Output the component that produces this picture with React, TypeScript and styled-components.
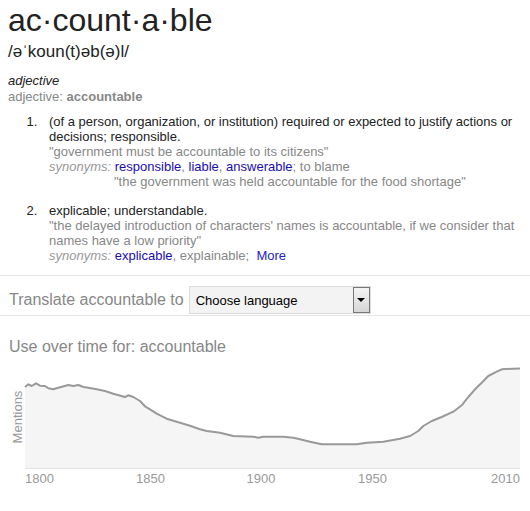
import React from "react";
import styled, { createGlobalStyle } from "styled-components";

const Global = createGlobalStyle`
  html, body { margin: 0; padding: 0; background: #fff; }
  body { font-family: Arial, "Liberation Sans", sans-serif; color: #222; }
`;

const Page = styled.div`
  width: 530px;
  overflow: hidden;
`;

const Entry = styled.section`
  padding: 2px 8px 12px 8px;
`;

const Headword = styled.h1`
  margin: 0;
  font-size: 32px;
  line-height: 36px;
  font-weight: normal;
  color: #222;
`;

const Pron = styled.div`
  font-size: 17px;
  line-height: 20px;
  margin-top: 4px;
  color: #222;
`;

const Pos = styled.div`
  margin-top: 11px;
  font-size: 13px;
  line-height: 16px;
  font-style: italic;
  color: #222;
`;

const Forms = styled.div`
  font-size: 13px;
  line-height: 16px;
  color: #878787;
  b { font-weight: bold; }
`;

const DefList = styled.ol`
  margin: 9px 0 0 0;
  padding: 0 0 0 33px;
  font-size: 13px;
  line-height: 15px;
`;

const DefItem = styled.li`
  padding-left: 8px;
  margin-bottom: 14px;
  &:last-child { margin-bottom: 0; }
`;

const DefText = styled.div`
  color: #222;
`;

const Example = styled.div<{ $indent?: boolean }>`
  color: #878787;
  padding-left: ${(p) => (p.$indent ? "65px" : "0")};
`;

const Syn = styled.div`
  color: #878787;
  i { font-style: italic; color: #999; }
`;

const SynLink = styled.a<{ $bright?: boolean }>`
  color: ${(p) => (p.$bright ? "#2222cc" : "#1a0dab")};
  text-decoration: none;
`;

const Divider = styled.hr`
  margin: 0;
  border: 0;
  border-top: 1px solid #e5e5e5;
  height: 0;
`;

const TranslateRow = styled.div`
  display: flex;
  align-items: flex-start;
  gap: 5px;
  padding: 10px 8px 0 9px;
  height: 29px;
`;

const TransLabel = styled.span`
  font-size: 16px;
  line-height: 28px;
  color: #878787;
`;

const SelectBox = styled.div`
  box-sizing: border-box;
  width: 182px;
  height: 28px;
  border: 1px solid #dcdcdc;
  background: #f3f3f3;
  display: flex;
  align-items: center;
  justify-content: space-between;
  padding-left: 6px;
  font-size: 13px;
  color: #000;
`;

const DropButton = styled.div`
  box-sizing: border-box;
  width: 17px;
  height: 26px;
  border: 1px solid #777;
  background: linear-gradient(#f4f4f4, #d6d6d6);
  display: flex;
  align-items: center;
  justify-content: center;
`;

const Arrow = styled.div`
  width: 0;
  height: 0;
  border-left: 4px solid transparent;
  border-right: 4px solid transparent;
  border-top: 4px solid #000;
`;

const Usage = styled.section`
  padding: 0;
`;

const UsageTitle = styled.div`
  padding: 22px 0 0 9px;
  font-size: 16px;
  line-height: 18px;
  color: #878787;
`;

const ChartSvg = styled.svg`
  display: block;
`;

const pts: [number, number][] = [
  [25, 386], [28.3, 383.3], [31.7, 385], [36, 382.3], [40, 384.7], [45, 385],
  [48.3, 387.3], [53.3, 388.3], [58.3, 386.7], [68.3, 384], [73.3, 385], [78.3, 384],
  [83.3, 386], [88.3, 386.7], [96.7, 388.3], [105, 390], [113.3, 392.7], [125, 396],
  [128.3, 394.3], [133.3, 396], [140, 400], [145, 405.3], [150, 408.3], [156.7, 412.7],
  [166.7, 417.7], [180, 421.7], [190, 424.7], [200, 428.3], [206.7, 430], [220, 431.7],
  [233.3, 435], [253.3, 435.7], [258.3, 436.7], [263.3, 435.7], [283.3, 435.7],
  [293.3, 436.7], [300, 438.3], [310, 440.7], [321.7, 443.3], [356.7, 443.3],
  [366.7, 441.7], [383.3, 440.7], [400, 437.7], [410, 435], [418.3, 430], [423.3, 425],
  [431.7, 420], [441.7, 416], [453.3, 410.7], [461.7, 404.3], [468.3, 396], [475, 388.3],
  [481.7, 381.7], [488.3, 375], [496.7, 370.7], [501.7, 368.3], [513.3, 367.7], [520, 367.5],
];

const Y0 = 355;
const line = pts.map(([x, y], i) => `${i ? "L" : "M"}${x} ${y - Y0}`).join(" ");
const area = `${line} L520 ${467 - Y0} L25 ${467 - Y0} Z`;

const years = [
  { t: "1800", x: 39.5 },
  { t: "1850", x: 150.5 },
  { t: "1900", x: 261 },
  { t: "1950", x: 372.5 },
  { t: "2010", x: 505.5 },
];

export default function App() {
  return (
    <Page>
      <Global />
      <Entry>
        <Headword>ac·count·a·ble</Headword>
        <Pron>/əˈkoun(t)əb(ə)l/</Pron>
        <Pos>adjective</Pos>
        <Forms>
          adjective: <b>accountable</b>
        </Forms>
        <DefList>
          <DefItem>
            <DefText>
              (of a person, organization, or institution) required or expected to justify actions or
              decisions; responsible.
            </DefText>
            <Example>"government must be accountable to its citizens"</Example>
            <Syn>
              <i>synonyms:</i> <SynLink href="#">responsible</SynLink>, <SynLink href="#">liable</SynLink>,{" "}
              <SynLink href="#">answerable</SynLink>; to blame
            </Syn>
            <Example $indent>"the government was held accountable for the food shortage"</Example>
          </DefItem>
          <DefItem>
            <DefText>explicable; understandable.</DefText>
            <Example>
              "the delayed introduction of characters' names is accountable, if we consider that names
              have a low priority"
            </Example>
            <Syn>
              <i>synonyms:</i> <SynLink href="#">explicable</SynLink>, explainable;&nbsp;{" "}
              <SynLink href="#" $bright>More</SynLink>
            </Syn>
          </DefItem>
        </DefList>
      </Entry>
      <Divider />
      <TranslateRow>
        <TransLabel>Translate accountable to</TransLabel>
        <SelectBox>
          <span>Choose language</span>
          <DropButton>
            <Arrow />
          </DropButton>
        </SelectBox>
      </TranslateRow>
      <Divider />
      <Usage>
        <UsageTitle>Use over time for: accountable</UsageTitle>
        <ChartSvg width={530} height={145} viewBox="0 0 530 145">
          <path d={area} fill="#f5f5f5" />
          <line x1={25} x2={520} y1={467 - Y0 + 0.5} y2={467 - Y0 + 0.5} stroke="#e3e3e3" strokeWidth={1} />
          <path d={line} fill="none" stroke="#999" strokeWidth={2} strokeLinejoin="round" />
          <text
            x={0}
            y={0}
            transform={`translate(21.5 ${416 - Y0}) rotate(-90)`}
            textAnchor="middle"
            fontSize={13}
            fill="#999"
            fontFamily="Arial, 'Liberation Sans', sans-serif"
          >
            Mentions
          </text>
          {years.map((y) => (
            <text
              key={y.t}
              x={y.x}
              y={482 - Y0}
              textAnchor="middle"
              fontSize={13}
              fill="#999"
              fontFamily="Arial, 'Liberation Sans', sans-serif"
            >
              {y.t}
            </text>
          ))}
        </ChartSvg>
      </Usage>
    </Page>
  );
}
